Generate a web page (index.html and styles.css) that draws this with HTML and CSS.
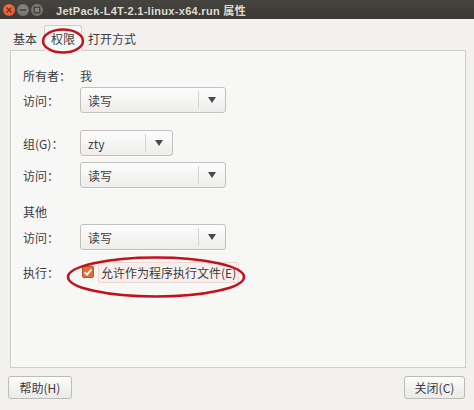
FILE: index.html
```html
<!DOCTYPE html>
<html lang="zh">
<head>
<meta charset="utf-8">
<link rel="stylesheet" href="styles.css">
</head>
<body>
<div class="window">
  <div class="titlebar">
    <span class="wbtn close"><svg width="8" height="8" viewBox="0 0 8 8"><path d="M1.5 1.5 L6.5 6.5 M6.5 1.5 L1.5 6.5" stroke="#7a2a12" stroke-width="1.4"/></svg></span>
    <span class="wbtn min"><svg width="8" height="8" viewBox="0 0 8 8"><path d="M1 4 H7" stroke="#3a3935" stroke-width="1.4"/></svg></span>
    <span class="wbtn max"><svg width="8" height="8" viewBox="0 0 8 8"><rect x="1.2" y="1.2" width="5.6" height="5.6" fill="none" stroke="#3a3935" stroke-width="1.2"/></svg></span>
    <span class="title">JetPack-L4T-2.1-linux-x64.run 属性</span>
  </div>
  <div class="tabs">
    <span class="tab">基本</span>
    <span class="tab active">权限</span>
    <span class="tab">打开方式</span>
  </div>
  <div class="frame">
    <div class="row r1"><span class="lbl">所有者：</span><span class="val">我</span></div>
    <div class="row r2"><span class="lbl">访问：</span><div class="combo wide"><span class="ctext">读写</span><span class="carrow"></span></div></div>
    <div class="row r3"><span class="lbl">组(G)：</span><div class="combo narrow"><span class="ctext">zty</span><span class="carrow"></span></div></div>
    <div class="row r4"><span class="lbl">访问：</span><div class="combo wide"><span class="ctext">读写</span><span class="carrow"></span></div></div>
    <div class="row r5"><span class="lbl">其他</span></div>
    <div class="row r6"><span class="lbl">访问：</span><div class="combo wide"><span class="ctext">读写</span><span class="carrow"></span></div></div>
    <div class="row r7"><span class="lbl">执行：</span>
      <span class="check"><svg width="12" height="12" viewBox="0 0 12 12"><rect x="0.5" y="0.5" width="11" height="11" rx="1.5" fill="#e06e3c" stroke="#b8552a"/><path d="M2.6 6.2 L5 8.6 L9.4 3.4" fill="none" stroke="#fff" stroke-width="1.8"/></svg></span>
      <span class="chklabel">允许作为程序执行文件(E)</span>
    </div>
  </div>
  <div class="footer">
    <span class="btn">帮助(H)</span>
    <span class="btn">关闭(C)</span>
  </div>
  <svg class="annot" width="474" height="410" viewBox="0 0 474 410">
    <ellipse cx="63" cy="41" rx="20" ry="11.5" fill="none" stroke="#c3121c" stroke-width="2.4"/>
    <ellipse cx="156" cy="277" rx="88" ry="19.5" fill="none" stroke="#c3121c" stroke-width="2.6"/>
  </svg>
</div>
</body>
</html>
```
FILE: styles.css
```css
html, body {
  margin: 0;
  padding: 0;
}
body {
  width: 474px;
  height: 410px;
  overflow: hidden;
  background: #f2f1f0;
  font-family: "Noto Sans CJK SC", "Noto Sans", sans-serif;
  font-size: 12px;
  color: #3c3c3c;
}
.window {
  position: relative;
  width: 474px;
  height: 410px;
  background: #f2f1f0;
}
.titlebar {
  height: 19px;
  background: linear-gradient(#45443f, #3a3935);
  display: flex;
  align-items: center;
  padding-left: 3px;
}
.wbtn {
  width: 12px;
  height: 12px;
  border-radius: 50%;
  display: flex;
  align-items: center;
  justify-content: center;
  margin-right: 2px;
}
.close {
  background: radial-gradient(circle at 50% 40%, #f6784a, #d9502a);
}
.min, .max {
  background: radial-gradient(circle at 50% 40%, #8a8983, #6a6964);
}
.title {
  margin-left: 11px;
  font-family: "Liberation Sans", "Noto Sans CJK SC", sans-serif;
  font-weight: bold;
  font-size: 11px;
  letter-spacing: 0.3px;
  color: #dfdbd2;
}
.tabs {
  height: 31px;
  display: flex;
  align-items: flex-end;
  padding-left: 12px;
}
.tab {
  height: 22px;
  line-height: 22px;
  padding: 0 4px 0 1px;
  margin-right: 3px;
}
.active {
  height: 25px;
  line-height: 25px;
  padding: 0 6px 0 6px;
  margin-right: 5px;
  background: #f7f7f6;
  border: 1px solid #d0cecb;
  border-bottom: none;
  border-radius: 3px 3px 0 0;
  margin-bottom: -1px;
  position: relative;
  z-index: 1;
}
.frame {
  margin: 0 8px 0 10px;
  height: 318px;
  border: 1px solid #cfcdca;
  background: #f7f7f6;
  box-sizing: border-box;
  padding: 14px 0 0 12px;
}
.row {
  display: flex;
  align-items: center;
}
.lbl {
  width: 57px;
  flex: none;
}
.r1 { height: 20px; }
.r2 { margin-top: 2px; }
.r3 { margin-top: 17px; }
.r4 { margin-top: 6px; }
.r5 { margin-top: 13px; height: 20px; }
.r6 { margin-top: 3px; }
.r7 { margin-top: 12px; height: 20px; }
.combo {
  height: 26px;
  box-sizing: border-box;
  border: 1px solid #c2c0bc;
  border-radius: 3px;
  background: linear-gradient(#fdfdfd, #eeedec);
  box-shadow: 0 1px 0 rgba(255,255,255,0.8);
  display: flex;
  align-items: center;
}
.wide { width: 146px; }
.narrow { width: 93px; }
.ctext {
  flex: 1;
  padding-left: 7px;
}
.carrow {
  width: 26px;
  height: 18px;
  border-left: 1px solid #d6d4d1;
  display: flex;
  align-items: center;
  justify-content: center;
}
.carrow::after {
  content: "";
  border-left: 4px solid transparent;
  border-right: 4px solid transparent;
  border-top: 6px solid #4a4a4a;
}
.check {
  width: 12px;
  height: 12px;
  margin-left: 2px;
  display: flex;
}
.chklabel {
  margin-left: 4px;
  padding: 1px 2px;
  background: #f8efec;
  border: 1px solid #ead9d2;
  border-radius: 2px;
}
.footer {
  display: flex;
  justify-content: space-between;
  padding: 8px 9px 0 8px;
}
.btn {
  height: 23px;
  box-sizing: border-box;
  border: 1px solid #bdbbb7;
  border-radius: 3px;
  background: linear-gradient(#fcfcfc, #ebeae8);
  display: flex;
  align-items: center;
  justify-content: center;
}
.btn:first-child { width: 64px; }
.btn:last-child { width: 61px; }
.annot {
  position: absolute;
  left: 0;
  top: 0;
  z-index: 5;
  pointer-events: none;
}
```
